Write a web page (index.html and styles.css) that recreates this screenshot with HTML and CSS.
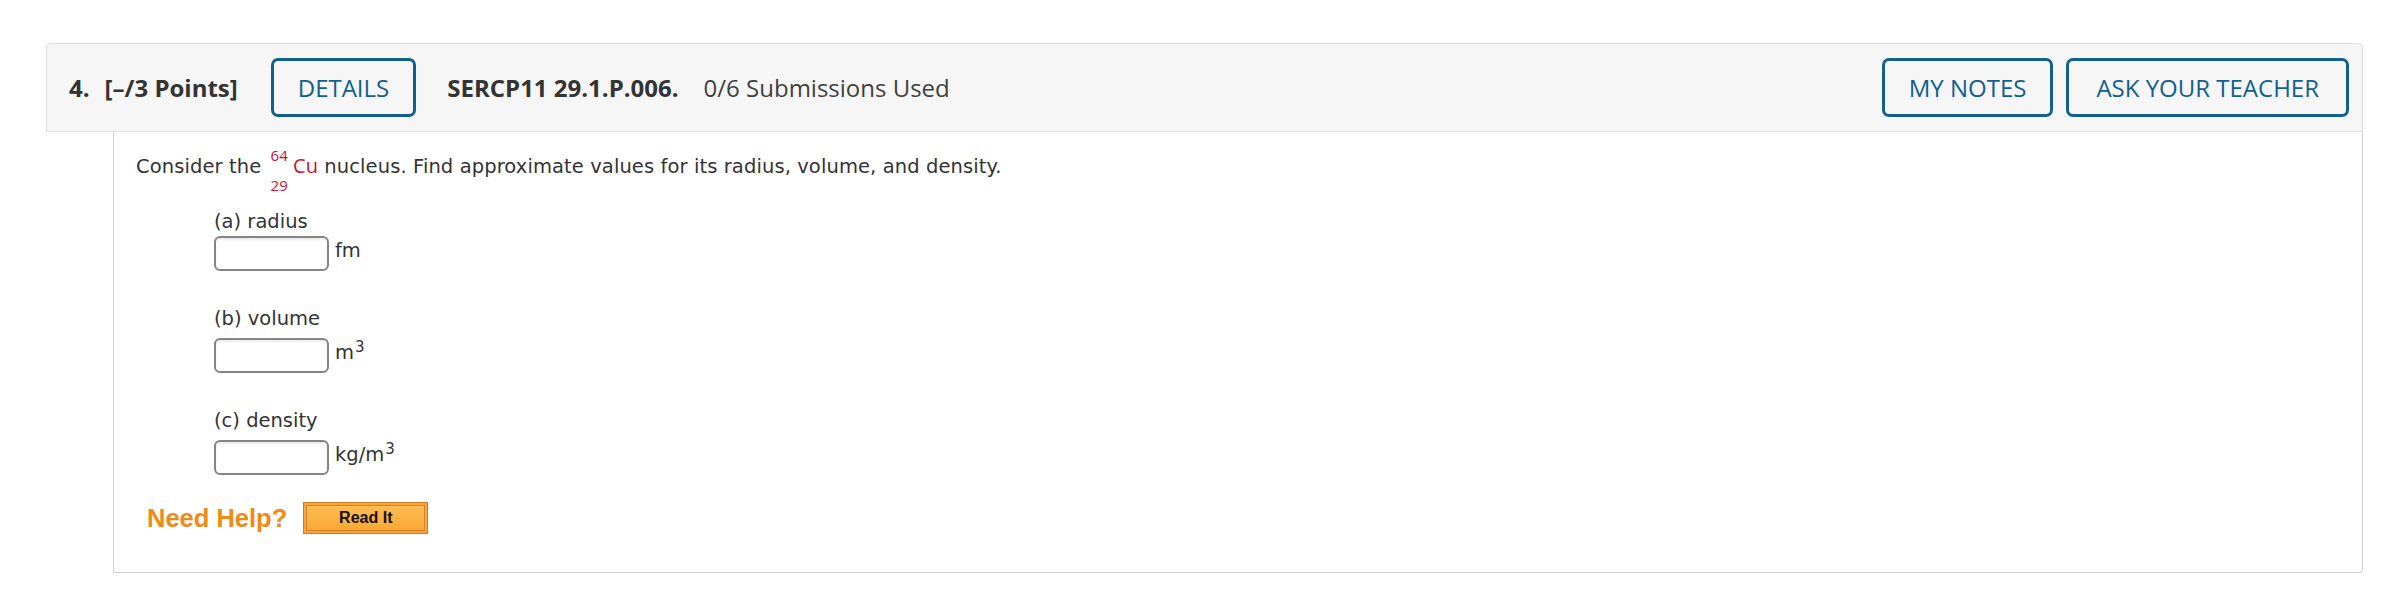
FILE: index.html
```html
<!DOCTYPE html>
<html lang="en">
<head>
<meta charset="utf-8">
<title>Question 4</title>
<link rel="stylesheet" href="styles.css">
</head>
<body>
<div class="page">
  <div class="question">
    <div class="qhead">
      <div class="qinfo">
        <span class="qnum">4.</span>
        <span class="qpts">[–/3 Points]</span>
        <button class="btn btn-details">DETAILS</button>
        <span class="qid">SERCP11 29.1.P.006.</span>
        <span class="qsub">0/6 Submissions Used</span>
      </div>
      <div class="qactions">
        <button class="btn">MY NOTES</button>
        <button class="btn btn-ask">ASK YOUR TEACHER</button>
      </div>
    </div>
    <div class="qbody">
      <p class="prompt">Consider the <span class="iso"><span class="iso-a">64</span><span class="iso-z">29</span></span><span class="elem">Cu</span> nucleus. Find approximate values for its radius, volume, and density.</p>
      <div class="part part-a">
        <div class="plabel">(a) radius</div>
        <div class="prow"><span class="answer"></span><span class="unit">fm</span></div>
      </div>
      <div class="part">
        <div class="plabel">(b) volume</div>
        <div class="prow"><span class="answer"></span><span class="unit">m<sup>3</sup></span></div>
      </div>
      <div class="part">
        <div class="plabel">(c) density</div>
        <div class="prow"><span class="answer"></span><span class="unit">kg/m<sup>3</sup></span></div>
      </div>
      <div class="help">
        <span class="need">Need Help?</span>
        <button class="readit"><span class="readit-in">Read It</span></button>
      </div>
    </div>
  </div>
</div>
</body>
</html>
```

FILE: styles.css
```css
html, body {
  margin: 0;
  padding: 0;
  background: #ffffff;
}

.page {
  padding: 43px 0 0 46px;
}

.question {
  width: 2317px;
}

.qhead {
  display: flex;
  justify-content: space-between;
  align-items: center;
  background: #f6f6f6;
  border: 1px solid #dedede;
  border-radius: 4px 4px 0 0;
  padding: 14px 13px 14px 22px;
  font-family: "Open Sans", "Liberation Sans", sans-serif;
  font-size: 24px;
  color: #333333;
}

.qinfo {
  display: flex;
  align-items: center;
}

.qnum {
  font-weight: 700;
  margin-right: 15px;
}

.qpts {
  font-weight: 700;
  margin-right: 33px;
}

.qid {
  font-weight: 700;
  margin-left: 31px;
  margin-right: 25px;
}

.qsub {
  color: #3f3f3f;
}

.qactions {
  display: flex;
  gap: 13px;
}

.btn {
  box-sizing: border-box;
  height: 59px;
  padding: 0 24px;
  border: 3px solid #11608f;
  border-radius: 7px;
  background: transparent;
  color: #11608f;
  font-family: "Open Sans", "Liberation Sans", sans-serif;
  font-size: 24px;
  font-weight: 400;
  line-height: 1;
  cursor: pointer;
}

.btn-ask {
  padding: 0 27px;
}

.qbody {
  margin-left: 67px;
  border: 1px solid #cfcfcf;
  border-top: none;
  border-radius: 0 0 4px 0;
  padding: 16px 22px 38px 22px;
  font-family: "DejaVu Sans", Verdana, sans-serif;
  font-size: 19.5px;
  color: #333333;
}

.prompt {
  margin: 0;
  letter-spacing: 0.1px;
}

.iso {
  display: inline-block;
  vertical-align: -18px;
  font-family: "Open Sans", "Liberation Sans", sans-serif;
  font-size: 15px;
  line-height: 15px;
  color: #c8102e;
  margin: 0 5px 0 3px;
}

.iso-a,
.iso-z {
  display: block;
}

.iso-z {
  margin-top: 15px;
}

.elem {
  color: #c8102e;
  font-family: "Open Sans", "Liberation Sans", sans-serif;
  font-size: 20px;
}

.part {
  margin-left: 78px;
  margin-top: 36px;
}

.part-a {
  margin-top: 17px;
}

.plabel {
  line-height: 23px;
}

.prow {
  display: flex;
  align-items: flex-start;
  margin-top: 8px;
}

.part-a .prow {
  margin-top: 3px;
}

.answer {
  box-sizing: border-box;
  width: 115px;
  height: 35px;
  border: 2px solid #858585;
  border-radius: 6px;
  background: #ffffff;
  box-shadow: inset 0 2px 2px rgba(0, 0, 0, 0.08);
}

.unit {
  margin-left: 6px;
  padding-top: 3px;
  line-height: 23px;
}

.unit sup {
  font-size: 15px;
  line-height: 0;
  vertical-align: 7px;
  margin-left: 1px;
}

.help {
  display: flex;
  align-items: center;
  margin-top: 27px;
  margin-left: 11px;
}

.need {
  font-family: "Liberation Sans", Arial, sans-serif;
  font-weight: 700;
  font-size: 25.5px;
  color: #ef8a14;
  margin-right: 16px;
}

.readit {
  box-sizing: border-box;
  width: 125px;
  height: 32px;
  padding: 2px;
  border: 1px solid #cf7b22;
  background: #f9a539;
  cursor: pointer;
}

.readit-in {
  box-sizing: border-box;
  display: flex;
  align-items: center;
  justify-content: center;
  height: 100%;
  border: 1px solid #d4822c;
  background: linear-gradient(#fdbd52, #f9a733);
  font-family: "Liberation Sans", Arial, sans-serif;
  font-weight: 700;
  font-size: 16px;
  color: #111111;
}
```
